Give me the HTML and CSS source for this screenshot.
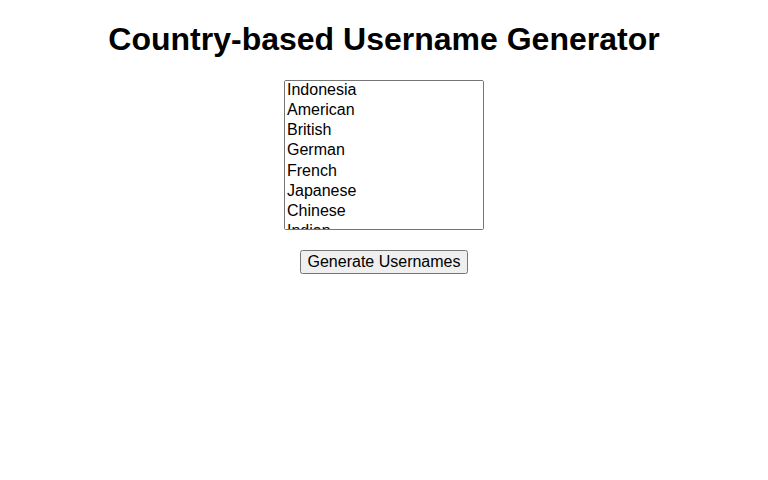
FILE: index.html
```html
<!DOCTYPE html>
<html>
<head>
<meta charset="utf-8">
<title>Country-based Username Generator</title>
<link rel="stylesheet" href="styles.css">
</head>
<body>
<div class="page">
  <h1 class="title">Country-based Username Generator</h1>
  <select class="country-list" multiple>
    <option>Indonesia</option>
    <option>American</option>
    <option>British</option>
    <option>German</option>
    <option>French</option>
    <option>Japanese</option>
    <option>Chinese</option>
    <option>Indian</option>
    <option>Russian</option>
    <option>Brazilian</option>
    <option>Korean</option>
    <option>Spanish</option>
  </select>
  <button class="generate-btn" type="button">Generate Usernames</button>
</div>
</body>
</html>
```
FILE: styles.css
```css
html, body {
  margin: 0;
  padding: 0;
  background: #ffffff;
}
body {
  font-family: "Liberation Sans", Arial, sans-serif;
  color: #000000;
}
.page {
  display: flex;
  flex-direction: column;
  align-items: center;
}
.title {
  font-size: 32px;
  font-weight: bold;
  margin: 21.44px 0;
  text-align: center;
}
.country-list {
  width: 200px;
  height: 150px;
  font-family: "Liberation Sans", Arial, sans-serif;
  font-size: 16px;
  margin: 0 0 20px 0;
}
.generate-btn {
  font-family: "Liberation Sans", Arial, sans-serif;
  font-size: 16px;
}
```
